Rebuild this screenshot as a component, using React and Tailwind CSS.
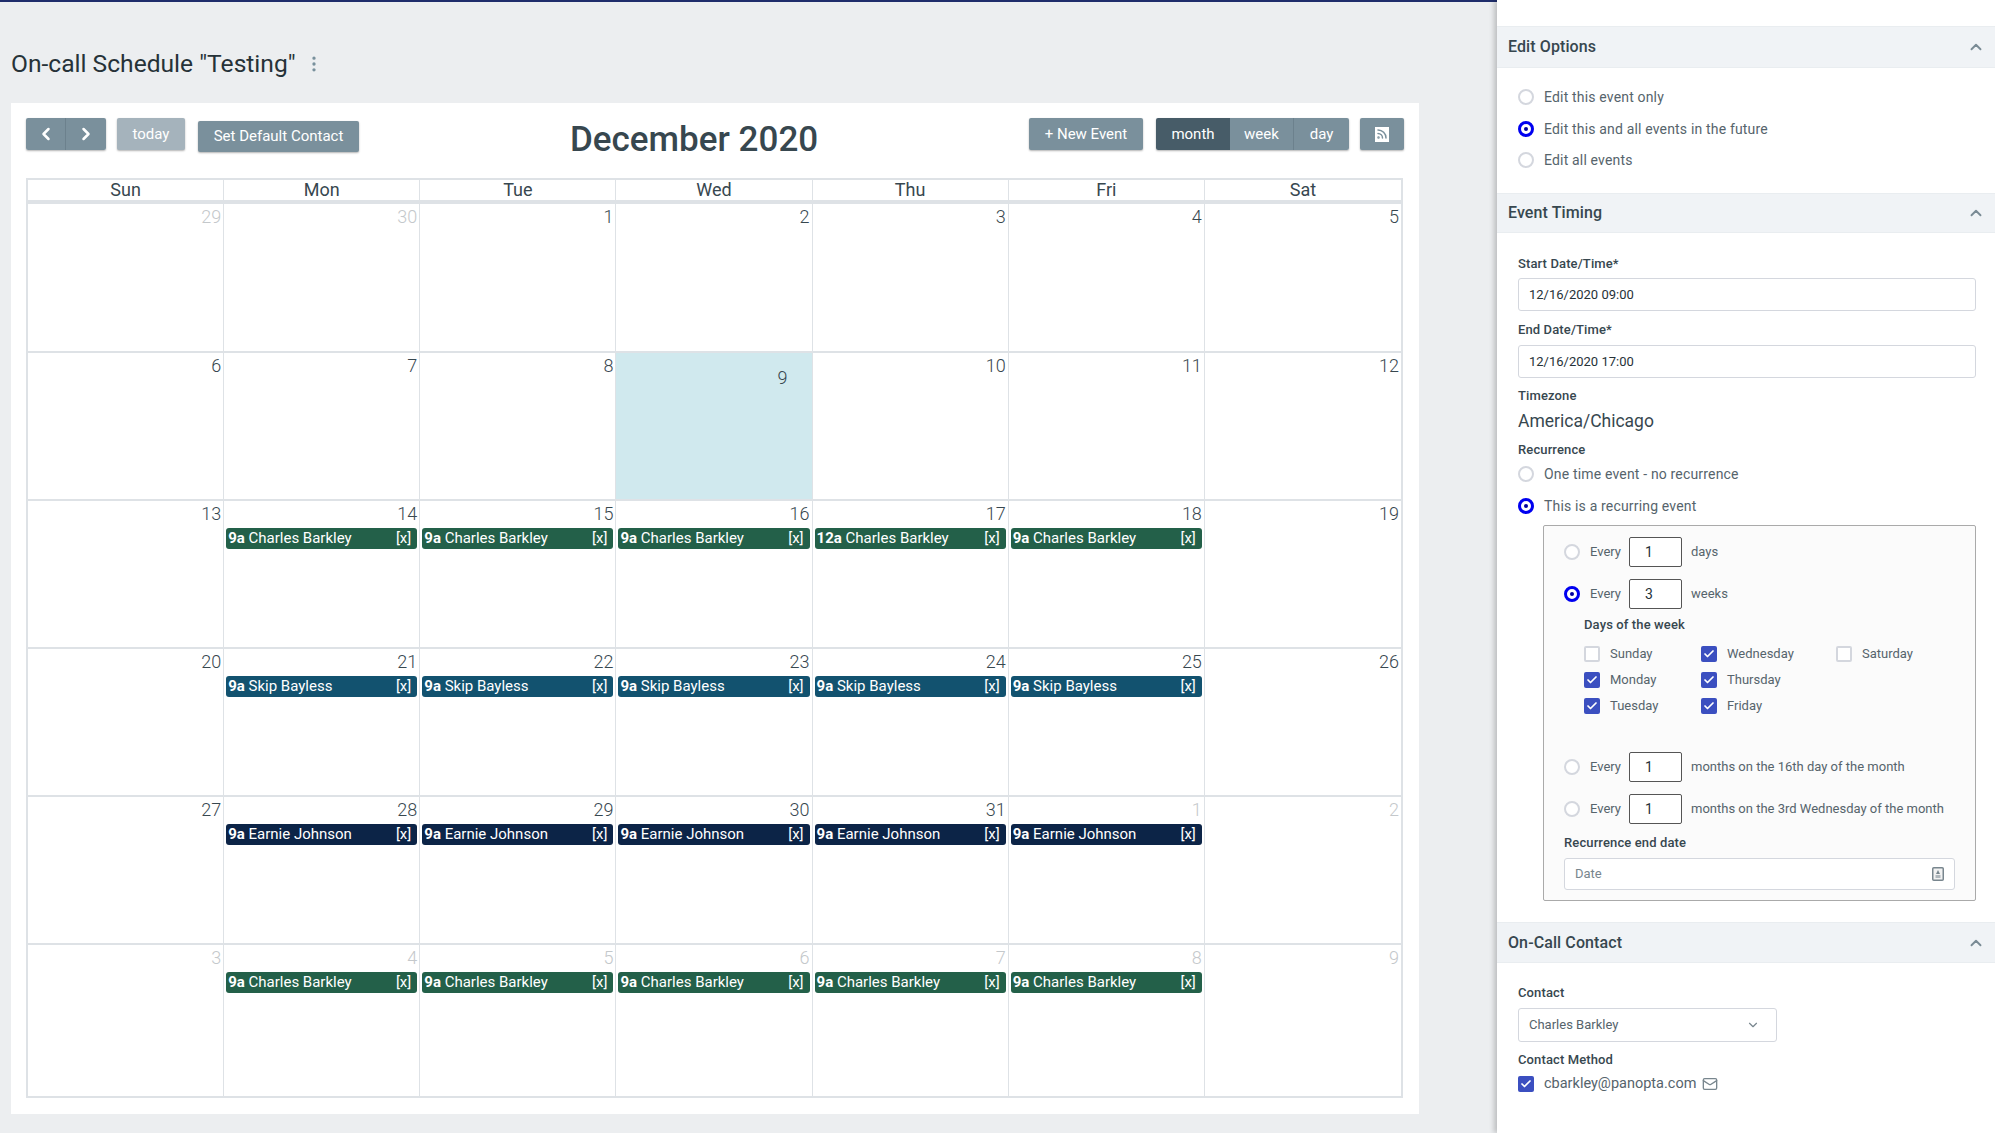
import { ChevronLeft, ChevronRight, ChevronUp, ChevronDown, Mail, Rss, Check, MoreVertical } from 'lucide-react'

const font = { fontFamily: 'Roboto, sans-serif' }

const weeks = [
  [[29, 1], [30, 1], [1], [2], [3], [4], [5]],
  [[6], [7], [8], [9, 0, 'today'], [10], [11], [12]],
  [[13], [14], [15], [16], [17], [18], [19]],
  [[20], [21], [22], [23], [24], [25], [26]],
  [[27], [28], [29], [30], [31], [1, 1], [2, 1]],
  [[3, 1], [4, 1], [5, 1], [6, 1], [7, 1], [8, 1], [9, 1]],
]

const people = [
  null,
  null,
  { name: 'Charles Barkley', color: 'bg-[#236049]' },
  { name: 'Skip Bayless', color: 'bg-[#12526f]' },
  { name: 'Earnie Johnson', color: 'bg-[#0c2447]' },
  { name: 'Charles Barkley', color: 'bg-[#236049]' },
]

const rowHeights = ['h-[149px]', 'h-[148px]', 'h-[148px]', 'h-[148px]', 'h-[148px]', 'h-[151px]']

function CalEvent({ time, person }) {
  return (
    <div className={`${person.color} mt-[5px] ml-[2px] mr-[2px] h-[21px] rounded-[3px] pl-[2px] pr-[6px] flex items-center justify-between text-white text-[15px] leading-none whitespace-nowrap`}>
      <span><b className="font-bold">{time}</b> {person.name}</span>
      <span>[x]</span>
    </div>
  )
}

function DayCell({ day, muted, today, person, time, last, lastRow, height }) {
  return (
    <div className={`${last ? '' : 'border-r border-[#dee2e6]'} ${height} ${lastRow ? '' : 'border-b-2 border-b-[#dee2e6]'} ${today ? 'bg-[#d0e9ee]' : ''} min-w-0`}>
      <div className={`text-right text-[18px] font-light leading-[22px] h-[22px] ${today ? 'pr-[24px] pt-[14px]' : 'pr-[2px] pt-[2px]'} ${muted ? 'text-[#c4c8cb]' : 'text-[#37474f]'}`}>
        {day}
      </div>
      {person && <CalEvent time={time} person={person} />}
    </div>
  )
}

function Btn({ children, className = '' }) {
  return (
    <div className={`h-8 flex items-center justify-center text-white text-[15px] shadow-[0_1px_2px_rgba(0,0,0,0.3)] ${className}`}>
      {children}
    </div>
  )
}

function Calendar() {
  return (
    <div className="ml-[11px] mt-[23px] w-[1408px] h-[1011px] bg-white pt-[15px] pl-[15px] pr-[15px]">
      <div className="flex items-start h-[60px]">
        <div className="flex rounded-[2px] overflow-hidden shadow-[0_1px_2px_rgba(0,0,0,0.3)]">
          <div className="w-10 h-8 bg-[#7a909c] border-r border-[#6c818d] flex items-center justify-center text-white"><ChevronLeft size={20} strokeWidth={3} /></div>
          <div className="w-10 h-8 bg-[#7a909c] flex items-center justify-center text-white"><ChevronRight size={20} strokeWidth={3} /></div>
        </div>
        <Btn className="ml-[11px] w-[68px] bg-[#a5b3bc] rounded-[2px]">today</Btn>
        <Btn className="ml-[13px] mt-[3px] w-[161px] h-[31px] bg-[#7a909c] rounded-[2px]">Set Default Contact</Btn>
        <h2 className="ml-[211px] mt-[1px] text-[35px] leading-[42px] font-medium text-[#37474f] whitespace-nowrap">December 2020</h2>
        <div className="ml-auto flex items-start">
          <Btn className="w-[114px] bg-[#7a909c] rounded-[2px]">+ New Event</Btn>
          <div className="ml-[13px] flex rounded-[2px] overflow-hidden shadow-[0_1px_2px_rgba(0,0,0,0.3)]">
            <div className="w-[74px] h-8 bg-[#475c68] text-white text-[15px] flex items-center justify-center">month</div>
            <div className="w-16 h-8 bg-[#7a909c] border-r border-[#6c818d] text-white text-[15px] flex items-center justify-center">week</div>
            <div className="w-[55px] h-8 bg-[#7a909c] text-white text-[15px] flex items-center justify-center">day</div>
          </div>
          <Btn className="ml-[11px] w-11 bg-[#7a909c] rounded-[2px]">
            <div className="w-[14px] h-[15px] bg-white flex items-center justify-center text-[#7a909c]"><Rss size={12} strokeWidth={3} /></div>
          </Btn>
        </div>
      </div>

      <div className="w-[1377px] border-2 border-[#dee2e6]">
        <div className="grid grid-cols-7 h-[24px] border-b-4 border-[#dee2e6]">
          {['Sun', 'Mon', 'Tue', 'Wed', 'Thu', 'Fri', 'Sat'].map((d, i) => (
            <div key={d} className={`text-center text-[18px] leading-[20px] text-[#37474f] ${i < 6 ? 'border-r border-[#dee2e6]' : ''}`}>{d}</div>
          ))}
        </div>
        {weeks.map((week, r) => (
          <div key={r} className="grid grid-cols-7">
            {week.map(([day, muted, today], i) => {
              const hasEvent = people[r] && i >= 1 && i <= 5
              return (
                <DayCell
                  key={i}
                  day={day}
                  muted={muted}
                  today={today}
                  person={hasEvent ? people[r] : null}
                  time={r === 2 && i === 4 ? '12a' : '9a'}
                  last={i === 6}
                  lastRow={r === 5}
                  height={rowHeights[r]}
                />
              )
            })}
          </div>
        ))}
      </div>
    </div>
  )
}

function SectionHead({ children, className = '' }) {
  return (
    <div className={`bg-[#f0f3f6] border-y border-[#e9edf0] pl-[11px] pr-[10px] flex items-center justify-between ${className}`}>
      <span className="text-[16px] font-medium tracking-[0.1px] text-[#37474f]">{children}</span>
      <ChevronUp size={18} strokeWidth={2.5} className="text-[#7a8b95]" />
    </div>
  )
}

function Radio({ on }) {
  return on ? (
    <span className="w-4 h-4 rounded-full border-[3px] border-[#0000f0] bg-white flex items-center justify-center shrink-0">
      <span className="w-1 h-1 rounded-full bg-[#0000a0]" />
    </span>
  ) : (
    <span className="w-4 h-4 rounded-full border-2 border-[#d4d7de] bg-white shrink-0" />
  )
}

function RadioRow({ on, children, className = '' }) {
  return (
    <div className={`flex items-center gap-[10px] h-5 text-[14px] tracking-[0.17px] text-[#56646c] ${className}`}>
      <Radio on={on} />
      <span>{children}</span>
    </div>
  )
}

function CheckBox({ on }) {
  return on ? (
    <span className="w-4 h-4 rounded-[2px] bg-[#3b4fc0] text-white flex items-center justify-center shrink-0"><Check size={12} strokeWidth={3.5} /></span>
  ) : (
    <span className="w-4 h-4 rounded-[2px] border-2 border-[#d4d7de] bg-white shrink-0" />
  )
}

function Day({ on, children }) {
  return (
    <div className="flex items-center gap-[10px] h-5 text-[13px] text-[#56646c]">
      <CheckBox on={on} />
      <span>{children}</span>
    </div>
  )
}

function Label({ children, className = '' }) {
  return <div className={`text-[13px] font-medium tracking-[0.12px] text-[#37474f] leading-4 ${className}`}>{children}</div>
}

function TextField({ value }) {
  return <div className="h-[33px] border border-[#d4d7de] rounded-[3px] pl-[10px] flex items-center text-[13px] text-[#263238] bg-white">{value}</div>
}

function EveryRow({ on, value, text, className = '' }) {
  return (
    <div className={`flex items-center text-[13px] text-[#56646c] ${className}`}>
      <Radio on={on} />
      <span className="ml-[10px] w-[39px]">Every</span>
      <span className="w-[53px] h-[30px] border border-[#555] rounded-[2px] bg-white flex items-center pl-[15px] text-[14px] text-[#263238]">{value}</span>
      <span className="ml-[9px]">{text}</span>
    </div>
  )
}

function Panel() {
  return (
    <aside className="w-[498px] h-[1133px] shrink-0 bg-white pt-[26px] shadow-[-3px_0_5px_rgba(0,0,0,0.2)] relative">
      <SectionHead className="h-[42px]">Edit Options</SectionHead>
      <div className="pl-[21px] pt-[19px] h-[125px]">
        <RadioRow>Edit this event only</RadioRow>
        <RadioRow on className="mt-[12px]">Edit this and all events in the future</RadioRow>
        <RadioRow className="mt-[11px]">Edit all events</RadioRow>
      </div>
      <SectionHead className="h-[40px]">Event Timing</SectionHead>
      <div className="pl-[21px] pr-[19px] pt-[23px] h-[689px]">
        <Label>Start Date/Time*</Label>
        <div className="mt-[6px]"><TextField value="12/16/2020 09:00" /></div>
        <Label className="mt-[11px]">End Date/Time*</Label>
        <div className="mt-[7px]"><TextField value="12/16/2020 17:00" /></div>
        <Label className="mt-[10px]">Timezone</Label>
        <div className="mt-[5px] text-[17.5px] leading-6 text-[#37474f]">America/Chicago</div>
        <Label className="mt-[9px]">Recurrence</Label>
        <RadioRow className="mt-[6px]">One time event - no recurrence</RadioRow>
        <RadioRow on className="mt-[12px]">This is a recurring event</RadioRow>
        <div className="ml-[25px] mt-[9px] h-[376px] border border-[#aaaaaa] rounded-[2px] bg-[#fbfbfb] pl-5 pr-5 pt-[11px]">
          <EveryRow value="1" text="days" />
          <EveryRow on value="3" text="weeks" className="mt-3" />
          <Label className="mt-[8px] ml-5">Days of the week</Label>
          <div className="mt-[11px] ml-5 grid grid-cols-[117px_135px_auto] gap-y-[6px]">
            <Day>Sunday</Day>
            <Day on>Wednesday</Day>
            <Day>Saturday</Day>
            <Day on>Monday</Day>
            <Day on>Thursday</Day>
            <span />
            <Day on>Tuesday</Day>
            <Day on>Friday</Day>
          </div>
          <EveryRow value="1" text="months on the 16th day of the month" className="mt-[36px]" />
          <EveryRow value="1" text="months on the 3rd Wednesday of the month" className="mt-3" />
          <Label className="mt-[11px]">Recurrence end date</Label>
          <div className="mt-[7px] h-[32px] w-[391px] border border-[#d4d7de] rounded-[3px] bg-white pl-[10px] pr-[10px] flex items-center justify-between text-[13px] text-[#78868e]">
            <span>Date</span>
            <svg width="12" height="14" viewBox="0 0 12 14">
              <rect x="0.75" y="0.75" width="10.5" height="12.5" rx="1" fill="#f2f2f2" stroke="#78868e" strokeWidth="1.5" />
              <path d="M6 3 L8 7 L4 7 Z" fill="#78868e" />
              <rect x="3.5" y="8" width="5" height="3" fill="#b0b8bd" />
            </svg>
          </div>
        </div>
      </div>
      <SectionHead className="h-[41px]">On-Call Contact</SectionHead>
      <div className="pl-[21px] pt-[22px]">
        <Label>Contact</Label>
        <div className="mt-[7px] w-[259px] h-[34px] border border-[#d4d7de] rounded-[3px] pl-[10px] pr-4 flex items-center justify-between text-[13px] text-[#56646c]">
          <span>Charles Barkley</span>
          <ChevronDown size={14} className="text-[#78868e]" />
        </div>
        <Label className="mt-[10px]">Contact Method</Label>
        <div className="mt-[5px] flex items-center text-[14.5px] text-[#56646c]">
          <CheckBox on />
          <span className="ml-[10px]">cbarkley@panopta.com</span>
          <Mail size={16} className="ml-[6px] text-[#78868e]" />
        </div>
      </div>
    </aside>
  )
}

export default function App() {
  return (
    <div style={font} className="flex w-[1995px] h-[1133px] overflow-hidden bg-[#eceef0]">
      <main className="flex-1 min-w-0">
        <div className="h-[2px] bg-[#1f2d6b]" />
        <div className="h-[78px] pl-[11px] pt-[46px] flex items-start">
          <h1 className="text-[24.6px] leading-8 text-[#263238] whitespace-nowrap">On-call Schedule "Testing"</h1>
          <MoreVertical size={20} className="ml-2 mt-[6px] text-[#78909c]" />
        </div>
        <Calendar />
      </main>
      <Panel />
    </div>
  )
}
